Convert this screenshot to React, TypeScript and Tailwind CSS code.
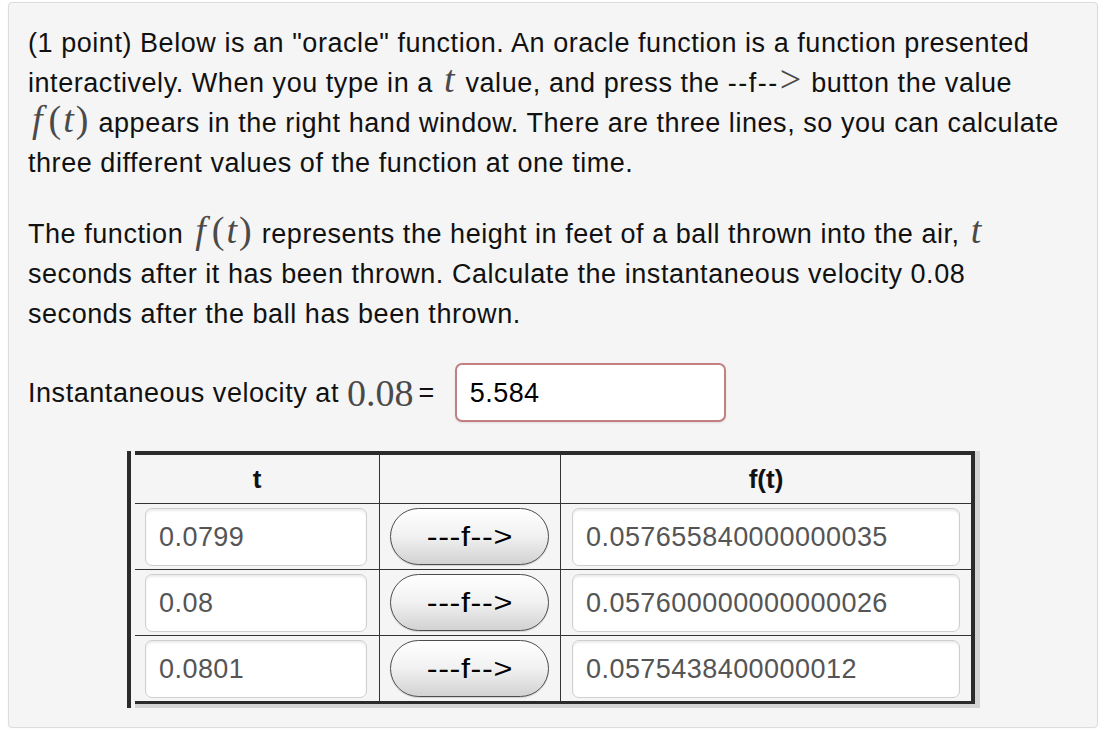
import React from 'react'

const sans = "font-['Liberation_Sans',Arial,sans-serif]"
const mathCls = "font-['Liberation_Serif','Times_New_Roman',serif] text-[38px] leading-[0] tracking-normal text-[#4a4a4a]"

function Ft() {
  return (
    <span className={mathCls}>
      <i className="ml-[4px] mr-[6px]">f</i>
      <span>(</span>
      <i className="mx-[2px]">t</i>
      <span className="mr-[2px]">)</span>
    </span>
  )
}

function T() {
  return (
    <span className={mathCls}>
      <i className="mx-[3px]">t</i>
    </span>
  )
}

function Field({ value, width }: { value: string; width: string }) {
  return (
    <div
      className={`${width} h-[58px] flex items-center pl-[13px] bg-white border border-[#cfcfcf] rounded-[7px] shadow-[inset_0_2px_2px_rgba(0,0,0,0.08)] text-[27px] tracking-[0.45px] text-[#555]`}
    >
      {value}
    </div>
  )
}

function OracleButton() {
  return (
    <div className="w-[159px] h-[57px] flex items-center justify-center rounded-full border-[1.5px] border-[#4d4d4d] bg-gradient-to-b from-white via-[#f1f1f1] to-[#d2d2d2] text-[27px] text-black shadow-[0_1px_1px_rgba(0,0,0,0.15)]">
      <span className="inline-block scale-x-[1.2] tracking-[0.5px]">---f--&gt;</span>
    </div>
  )
}

const rows = [
  { t: '0.0799', f: '0.057655840000000035' },
  { t: '0.08', f: '0.057600000000000026' },
  { t: '0.0801', f: '0.0575438400000012' },
]

export default function App() {
  return (
    <div className={`min-h-screen bg-white pt-[2px] pl-[8px] ${sans}`}>
      <div className="w-[1090px] h-[726px] bg-[#f5f5f5] border border-[#dcdcdc] rounded-[4px] shadow-[0_0_2px_rgba(0,0,0,0.06)] px-[19px] pt-[20px] text-[27px] leading-[40px] text-[#111] tracking-[0.55px]">
        <div className="whitespace-nowrap">
          <div>(1 point) Below is an "oracle" function. An oracle function is a function presented</div>
          <div>
            interactively. When you type in a <T /> value, and press the <span className="tracking-[1.5px]">--f--</span>
            <span className={`${mathCls} ml-[1px] mr-[2px]`}>&gt;</span> button the value
          </div>
          <div>
            <Ft /> appears in the right hand window. There are three lines, so you can calculate
          </div>
          <div>three different values of the function at one time.</div>
        </div>

        <div className="whitespace-nowrap mt-[31px]">
          <div>
            The function <Ft /> represents the height in feet of a ball thrown into the air, <T />
          </div>
          <div>seconds after it has been thrown. Calculate the instantaneous velocity 0.08</div>
          <div>seconds after the ball has been thrown.</div>
        </div>

        <div className="flex items-center mt-[29px] whitespace-nowrap">
          <span>Instantaneous velocity at</span>
          <span className={`${mathCls} leading-[40px] ml-[8px]`}>0.08</span>
          <span className="ml-[5px]">=</span>
          <div className="ml-[20px] w-[271px] h-[59px] flex items-center pl-[13px] bg-white border-2 border-[#c48080] rounded-[7px] shadow-[0_1px_2px_rgba(0,0,0,0.1)] text-[27px] tracking-[0.45px] text-black">
            5.584
          </div>
        </div>

        <div className="mt-[29px] flex justify-center">
          <div className="ml-[1px] border-l-4 border-[#2b2b2b] pb-1">
            <div className="ml-1 border-r-[5px] border-b-4 border-[#d4d4d4] -mb-1">
              <div className="border-t-4 border-r-4 border-b-[3px] border-[#2b2b2b]">
                <div className="flex h-[49px] border-b border-[#333] font-bold text-[26px] tracking-normal">
                  <div className="w-[245px] border-r border-[#333] flex items-center justify-center">t</div>
                  <div className="w-[181px] border-r border-[#333]"></div>
                  <div className="w-[410px] flex items-center justify-center">f(t)</div>
                </div>
                {rows.map((r, i) => (
                  <div
                    key={r.t}
                    className={`flex ${i < 2 ? 'h-[66px] border-b border-[#333]' : 'h-[65px]'}`}
                  >
                    <div className="w-[245px] border-r border-[#333] flex items-center pl-[10px]">
                      <Field value={r.t} width="w-[222px]" />
                    </div>
                    <div className="w-[181px] border-r border-[#333] flex items-center pl-[10px]">
                      <OracleButton />
                    </div>
                    <div className="w-[410px] flex items-center pl-[11px]">
                      <Field value={r.f} width="w-[388px]" />
                    </div>
                  </div>
                ))}
              </div>
            </div>
          </div>
        </div>
      </div>
    </div>
  )
}
